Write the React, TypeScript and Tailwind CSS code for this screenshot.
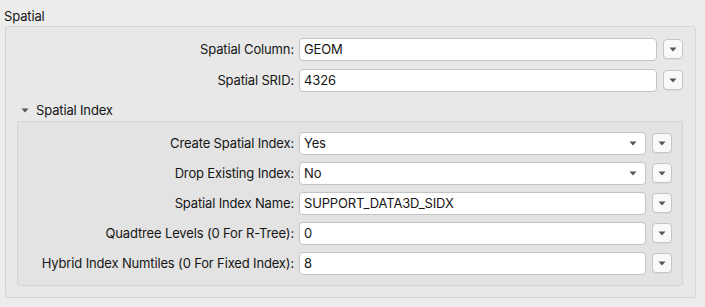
import React from "react";

type Row = { label: string; value: string; combo?: boolean };

const spatialRows: Row[] = [
  { label: "Spatial Column:", value: "GEOM" },
  { label: "Spatial SRID:", value: "4326" },
];

const indexRows: Row[] = [
  { label: "Create Spatial Index:", value: "Yes", combo: true },
  { label: "Drop Existing Index:", value: "No", combo: true },
  { label: "Spatial Index Name:", value: "SUPPORT_DATA3D_SIDX" },
  { label: "Quadtree Levels (0 For R-Tree):", value: "0" },
  { label: "Hybrid Index Numtiles (0 For Fixed Index):", value: "8" },
];

function Caret({ className = "" }: { className?: string }) {
  return (
    <svg width="8" height="5" viewBox="0 0 8 5" className={className}>
      <path d="M0.5 0.5 L7.5 0.5 L4 4.5 Z" fill="#555555" />
    </svg>
  );
}

function MenuButton() {
  return (
    <div className="w-[20px] h-[20px] shrink-0 rounded-[4px] border border-[#c6c6c6] bg-[#f9f9f9] shadow-[0_1px_0_rgba(0,0,0,0.04)] flex items-center justify-center">
      <Caret />
    </div>
  );
}

function FieldRow({ row, labelWidth }: { row: Row; labelWidth: string }) {
  return (
    <div className="flex items-center h-[22px]">
      <div className={`${labelWidth} shrink-0 text-right pr-[5px] whitespace-nowrap`}>
        {row.label}
      </div>
      <div className="flex-1 h-[23px] rounded-[4px] border border-[#c4c4c4] bg-white flex items-center pl-[4px] pr-[8px]">
        <span className="flex-1">{row.value}</span>
        {row.combo && <Caret />}
      </div>
      <div className="w-[26px] shrink-0 flex justify-end">
        <MenuButton />
      </div>
    </div>
  );
}

export default function App() {
  return (
    <div
      className="w-[705px] h-[307px] bg-[#ececec] text-[13px] leading-[16px] tracking-[-0.15px] text-[#161616] overflow-hidden"
      style={{ fontFamily: '"Inter", "Liberation Sans", sans-serif' }}
    >
      <div className="pt-[8px] pl-[4px] h-[26px]">Spatial</div>

      {/* outer group */}
      <div className="ml-[5px] w-[691px] rounded-[3px] border border-[#d5d5d5] bg-[#e8e8e8] pt-[11px] pb-[11px] pr-[12px]">
        <div className="flex flex-col gap-[9px]">
          {spatialRows.map((r) => (
            <FieldRow key={r.label} row={r} labelWidth="w-[293px]" />
          ))}
        </div>

        <div className="mt-[11px] flex items-center h-[16px] pl-[15px]">
          <Caret className="mr-[7px]" />
          <span>Spatial Index</span>
        </div>

        {/* inner group */}
        <div className="mt-[3px] ml-[11px] rounded-[3px] border border-[#d3d3d3] bg-[#e3e3e3] pt-[10px] pb-[11px] pr-[10px]">
          <div className="flex flex-col gap-[8px]">
            {indexRows.map((r) => (
              <FieldRow key={r.label} row={r} labelWidth="w-[281px]" />
            ))}
          </div>
        </div>
      </div>
    </div>
  );
}
